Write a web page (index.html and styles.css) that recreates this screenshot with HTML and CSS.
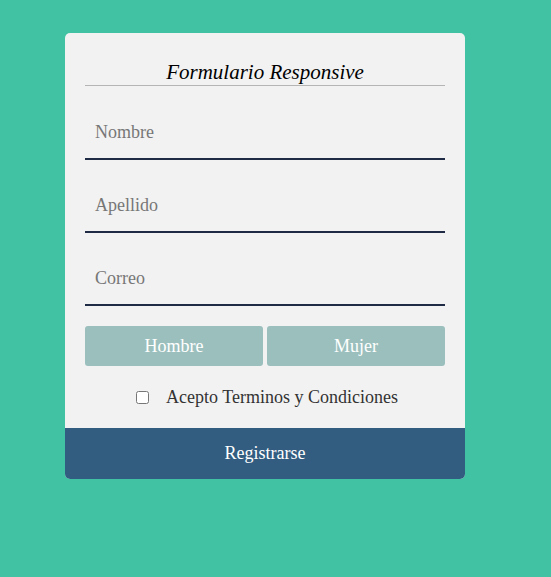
FILE: index.html
```html
<!DOCTYPE html>
<html lang="es">
<head>
<meta charset="utf-8">
<title>Formulario Responsive</title>
<link rel="stylesheet" href="styles.css">
</head>
<body>
<div class="card">
  <div class="card-body">
    <h4 class="title">Formulario Responsive</h4>
    <div class="field field-first" role="textbox"><span class="placeholder">Nombre</span></div>
    <div class="field" role="textbox"><span class="placeholder">Apellido</span></div>
    <div class="field" role="textbox"><span class="placeholder">Correo</span></div>
    <div class="genders">
      <div class="gender" role="button">Hombre</div>
      <div class="gender" role="button">Mujer</div>
    </div>
    <label class="terms">
      <input type="checkbox" class="check">
      <span class="terms-text">Acepto Terminos y Condiciones</span>
    </label>
  </div>
  <div class="submit" role="button">Registrarse</div>
</div>
</body>
</html>
```
FILE: styles.css
```css
html, body {
  margin: 0;
  padding: 0;
}
body {
  background: #40c2a3;
  font-family: "Liberation Serif", "Times New Roman", serif;
  padding: 33px 0 0 65px;
  min-height: 577px;
  box-sizing: border-box;
}
.card {
  width: 400px;
  background: #f2f2f2;
  border-radius: 5px;
  overflow: hidden;
  display: flex;
  flex-direction: column;
}
.card-body {
  padding: 27px 20px 0;
  display: flex;
  flex-direction: column;
}
.title {
  margin: 0;
  font-size: 21px;
  font-style: italic;
  font-weight: normal;
  line-height: 25px;
  text-align: center;
  color: #000;
  border-bottom: 1px solid #b5b5b5;
}
.field {
  box-sizing: border-box;
  height: 54px;
  margin-top: 19px;
  padding: 0 10px;
  border-bottom: 2px solid #1f2a44;
  display: flex;
  align-items: center;
  font-size: 18px;
  line-height: 20px;
  cursor: text;
}
.field-first {
  margin-top: 20px;
}
.placeholder {
  color: #777;
}
.genders {
  display: flex;
  gap: 4px;
  margin-top: 20px;
}
.gender {
  flex: 1;
  height: 40px;
  border-radius: 3px;
  background: #9bbfbd;
  color: #fff;
  font-size: 18px;
  display: flex;
  align-items: center;
  justify-content: center;
  cursor: pointer;
}
.terms {
  display: flex;
  align-items: center;
  justify-content: center;
  margin: 20px 0;
  height: 22px;
  font-size: 18px;
  color: #333;
}
.check {
  width: 13px;
  height: 13px;
  margin: 3px 3px 3px 4px;
}
.terms-text {
  margin-left: 14px;
}
.submit {
  height: 51px;
  background: #325d80;
  color: #fff;
  font-size: 18px;
  display: flex;
  align-items: center;
  justify-content: center;
  cursor: pointer;
}
```
